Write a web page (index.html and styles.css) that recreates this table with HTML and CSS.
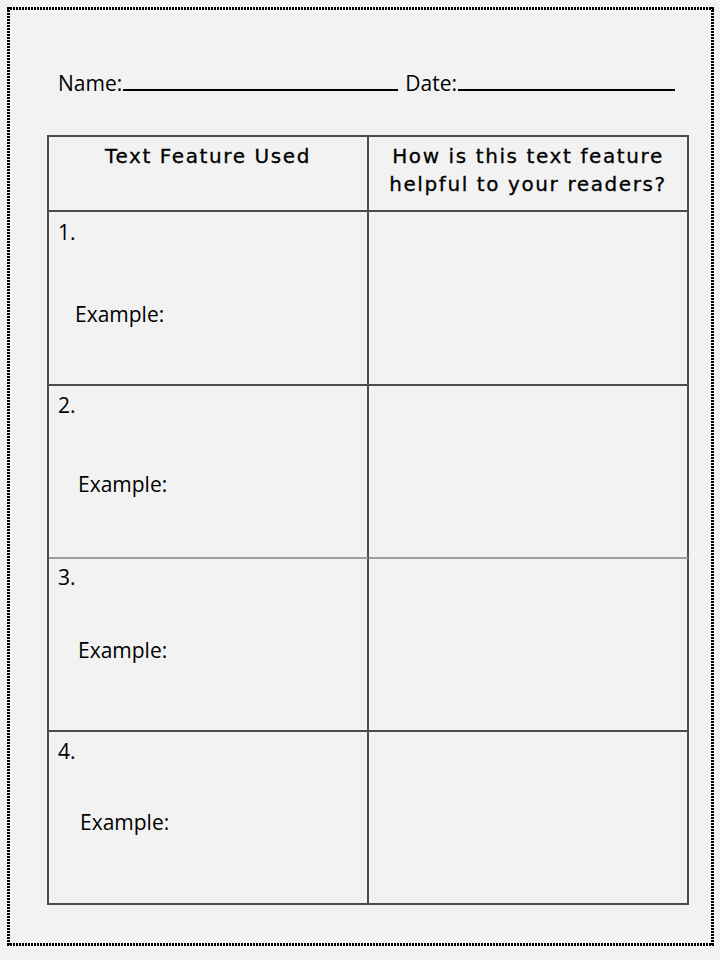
FILE: index.html
```html
<!DOCTYPE html>
<html lang="en">
<head>
<meta charset="utf-8">
<title>Text Features</title>
<link rel="stylesheet" href="styles.css">
</head>
<body>
<div class="page">
  <div class="fields">
    <span class="label">Name:</span><span class="blank blank-name"></span>
    <span class="label label-date">Date:</span><span class="blank blank-date"></span>
  </div>
  <div class="chart">
    <div class="cell head">Text Feature Used</div>
    <div class="cell head">How is this text feature<br>helpful to your readers?</div>

    <div class="cell entry row-1 row-tall"><span class="num">1.</span><span class="example">Example:</span></div>
    <div class="cell answer row-tall"></div>

    <div class="cell entry row-2 row-light"><span class="num">2.</span><span class="example">Example:</span></div>
    <div class="cell answer row-light"></div>

    <div class="cell entry row-3"><span class="num">3.</span><span class="example">Example:</span></div>
    <div class="cell answer"></div>

    <div class="cell entry row-4"><span class="num">4.</span><span class="example">Example:</span></div>
    <div class="cell answer"></div>
  </div>
</div>
</body>
</html>
```
FILE: styles.css
```css
html, body {
  margin: 0;
  padding: 0;
  background: #f2f2f2;
}

body {
  font-family: "Open Sans", "Noto Sans", sans-serif;
  color: #111;
}

.page {
  box-sizing: border-box;
  margin: 7px 0 0 7px;
  width: 707px;
  height: 939px;
  padding: 62px 0 0 40px;
  background:
    repeating-linear-gradient(90deg, #000 0 2px, transparent 2px 3px) left top / 100% 3px no-repeat,
    repeating-linear-gradient(90deg, #000 0 2px, transparent 2px 3px) left bottom / 100% 3px no-repeat,
    repeating-linear-gradient(180deg, #000 0 2px, transparent 2px 3px) left top / 3px 100% no-repeat,
    repeating-linear-gradient(180deg, #000 0 2px, transparent 2px 3px) right top / 3px 100% no-repeat,
    #f2f2f2;
}

.fields {
  display: flex;
  align-items: baseline;
  padding-left: 11px;
  font-size: 21px;
  line-height: 28px;
  color: #000;
}

.blank {
  display: inline-block;
  height: 10px;
  border-bottom: 2px solid #000;
  margin-bottom: -3px;
}

.blank-name {
  width: 275px;
  margin-left: 1px;
}

.label-date {
  margin-left: 7px;
}

.blank-date {
  width: 217px;
  margin-left: 1px;
}

.chart {
  margin-top: 38px;
  width: 642px;
  box-sizing: border-box;
  display: grid;
  grid-template-columns: 320px 320px;
  grid-template-rows: 75px 174px 173px 173px 173px;
  border-top: 2px solid #4c4c4c;
  border-left: 2px solid #4c4c4c;
}

.cell {
  box-sizing: border-box;
  border-right: 2px solid #4c4c4c;
  border-bottom: 2px solid #4c4c4c;
}

.head {
  padding-top: 5px;
  text-align: center;
  font-family: "DejaVu Sans", sans-serif;
  font-size: 20px;
  line-height: 28px;
  letter-spacing: 1.6px;
  color: #000;
  -webkit-text-stroke: 0.3px #000;
}

.row-light {
  border-bottom-color: #9c9c9c;
}

.entry {
  display: flex;
  flex-direction: column;
  align-items: flex-start;
  padding: 6px 0 0 9px;
  font-size: 21px;
  line-height: 28px;
  color: #000;
}

.example {
  margin-top: 54px;
  margin-left: 17px;
}

.row-2 {
  padding-top: 5px;
}

.row-2 .example {
  margin-top: 51px;
  margin-left: 20px;
}

.row-3 {
  padding-top: 4px;
}

.row-3 .example {
  margin-top: 45px;
  margin-left: 20px;
}

.row-4 {
  padding-top: 5px;
}

.row-4 .example {
  margin-top: 43px;
  margin-left: 22px;
}
```
